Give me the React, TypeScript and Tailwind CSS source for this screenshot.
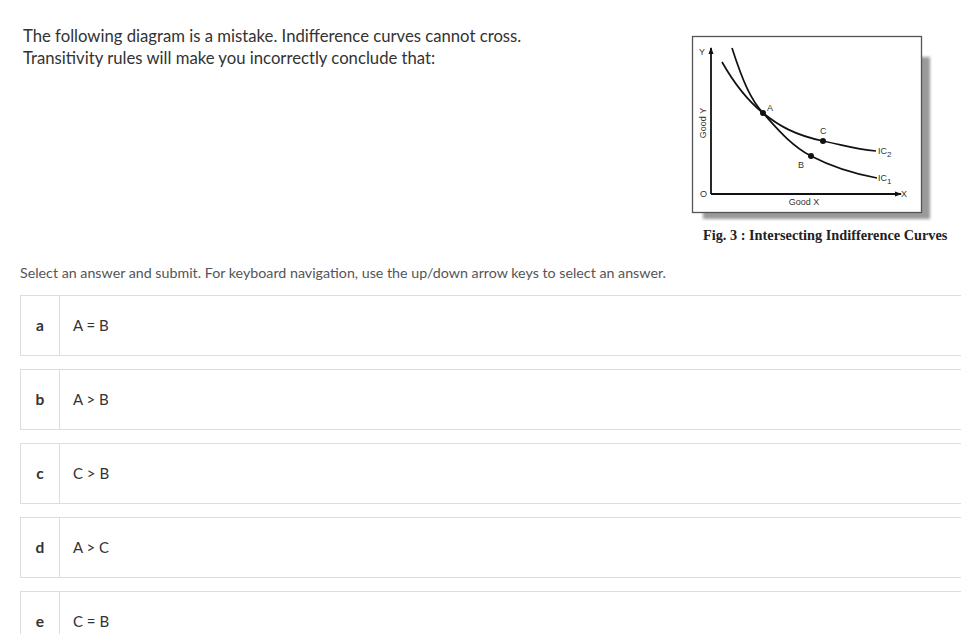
import React from "react";

const answers = [
  { k: "a", t: "A = B" },
  { k: "b", t: "A > B" },
  { k: "c", t: "C > B" },
  { k: "d", t: "A > C" },
  { k: "e", t: "C = B" },
];

function Chart() {
  const lbl = { fontFamily: "'Liberation Sans', Arial, sans-serif", fill: "#333" } as const;
  return (
    <svg width="250" height="192" viewBox="0 0 250 192">
      <defs>
        <filter id="sh" x="-10%" y="-10%" width="120%" height="120%">
          <feGaussianBlur stdDeviation="1.5" />
        </filter>
        <marker id="ah" markerUnits="userSpaceOnUse" markerWidth="7" markerHeight="6" refX="6" refY="3" orient="auto">
          <path d="M0,0.5 L7,3 L0,5.5 Z" fill="#111" />
        </marker>
      </defs>
      <rect x="18" y="27" width="227" height="162" fill="#9a9a9a" filter="url(#sh)" />
      <rect x="7.5" y="6.5" width="229" height="176" fill="#fff" stroke="#555" strokeWidth="1.3" />
      <line x1="26" y1="164" x2="26" y2="18" stroke="#111" strokeWidth="1.8" markerEnd="url(#ah)" />
      <line x1="26" y1="164" x2="216" y2="164" stroke="#111" strokeWidth="1.8" markerEnd="url(#ah)" />
      <path d="M47,18 C58,52 66,70 78,83 S105,115 126,126 S165,143 192,148" fill="none" stroke="#111" strokeWidth="1.7" />
      <path d="M37,32 C50,55 62,70 78,83 S110,105 138,111 S170,119 191,121" fill="none" stroke="#111" strokeWidth="1.7" />
      <circle cx="78" cy="83" r="3" fill="#111" />
      <circle cx="126" cy="126" r="3" fill="#111" />
      <circle cx="138" cy="111" r="3" fill="#111" />
      <text x="14" y="25" fontSize="9" {...lbl}>Y</text>
      <text x="216" y="167" fontSize="9" {...lbl}>X</text>
      <text x="15" y="167" fontSize="9" {...lbl}>O</text>
      <text x="82" y="81" fontSize="9" {...lbl}>A</text>
      <text x="113" y="138" fontSize="9" {...lbl}>B</text>
      <text x="135" y="104" fontSize="9" {...lbl}>C</text>
      <text x="193" y="124" fontSize="9" {...lbl}>
        IC<tspan fontSize="8" dy="3">2</tspan>
      </text>
      <text x="193" y="151" fontSize="9" {...lbl}>
        IC<tspan fontSize="8" dy="3">1</tspan>
      </text>
      <text x="119" y="175" fontSize="9" textAnchor="middle" {...lbl}>Good X</text>
      <text x="21" y="93" fontSize="9" textAnchor="middle" transform="rotate(-90 21 93)" {...lbl}>Good Y</text>
    </svg>
  );
}

export default function App() {
  return (
    <div className="relative w-[961px] h-[634px] overflow-hidden bg-white" style={{ fontFamily: "Lato, 'Liberation Sans', sans-serif" }}>
      <div className="flex h-[263px]">
        <div className="pl-[23px] pt-[25px] text-[16.7px] leading-[22px] text-[#333]">
          <p>The following diagram is a mistake. Indifference curves cannot cross.</p>
          <p>Transitivity rules will make you incorrectly conclude that:</p>
        </div>
        <div className="ml-auto mt-[30px] w-[276px] shrink-0">
          <Chart />
          <p
            className="mt-[6px] pl-[18px] text-[14.3px] leading-[14px] font-bold text-[#222] whitespace-nowrap"
            style={{ fontFamily: "'Liberation Serif', 'Times New Roman', serif" }}
          >
            Fig. 3 : Intersecting Indifference Curves
          </p>
        </div>
      </div>
      <p className="pl-[20px] text-[14.25px] leading-[20px] text-[#555] whitespace-nowrap">
        Select an answer and submit. For keyboard navigation, use the up/down arrow keys to select an answer.
      </p>
      <div className="mt-[12px] pl-[20px] flex flex-col gap-[13px]">
        {answers.map((a) => (
          <div key={a.k} className="flex h-[61px] w-[960px] shrink-0 border border-[#dcdde0]">
            <div className="w-[39px] flex items-center justify-center border-r border-[#dcdde0] text-[15.5px] font-bold text-[#333]">
              {a.k}
            </div>
            <div className="pl-[13px] flex items-center text-[15px] text-[#333]">{a.t}</div>
          </div>
        ))}
      </div>
    </div>
  );
}
